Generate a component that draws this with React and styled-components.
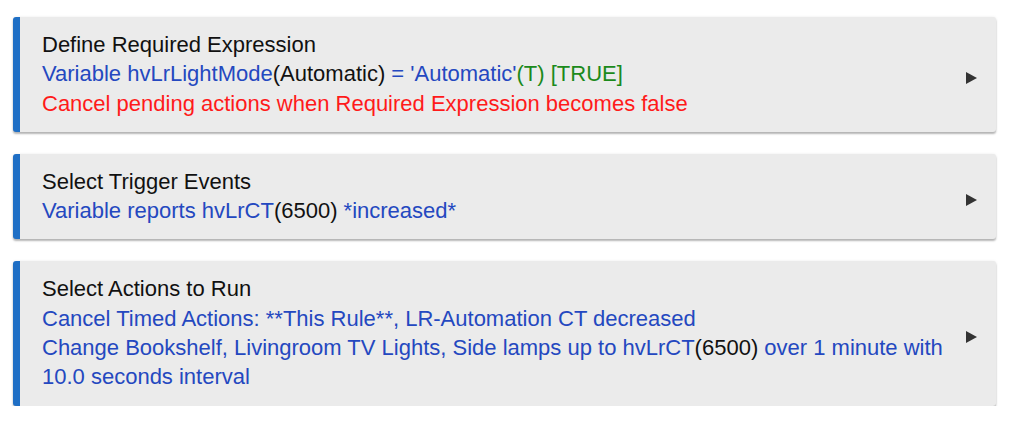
import React from "react";
import styled, { createGlobalStyle } from "styled-components";

const Global = createGlobalStyle`
  html, body { margin: 0; padding: 0; background: #ffffff; }
  body { font-family: "Liberation Sans", Arial, sans-serif; }
`;

const Page = styled.div`
  display: flex;
  flex-direction: column;
  gap: 22px;
  padding: 17px 28px 0 13px;
`;

const Card = styled.div`
  display: flex;
  align-items: center;
  background: #ebebeb;
  border-left: 7px solid #1f6fc5;
  border-radius: 3px;
  box-shadow: 0 2px 2px rgba(0, 0, 0, 0.28), 0 0 3px rgba(0, 0, 0, 0.08);
  padding: 13px 0 14px 22px;
`;

const Body = styled.div`
  flex: 1;
  font-size: 22px;
  line-height: 29.3px;
  color: #111;
  padding-right: 2px;
`;

const Line = styled.div`
  color: ${(p) => p.$color || "#111"};
`;

const Span = styled.span`
  color: ${(p) => p.$color};
`;

const Arrow = styled.div`
  width: 0;
  height: 0;
  border-top: 6px solid transparent;
  border-bottom: 6px solid transparent;
  border-left: 11px solid #333;
  margin: 8px 19px 0 14px;
  flex-shrink: 0;
`;

const BLUE = "#2448c0";
const RED = "#ff1a1a";
const GREEN = "#1b8a1b";
const BLACK = "#111";

export default function App() {
  return (
    <>
      <Global />
      <Page>
        <Card>
          <Body>
            <Line>Define Required Expression</Line>
            <Line $color={BLUE}>
              Variable hvLrLightMode<Span $color={BLACK}>(Automatic)</Span> = 'Automatic'
              <Span $color={GREEN}>(T) [TRUE]</Span>
            </Line>
            <Line $color={RED}>Cancel pending actions when Required Expression becomes false</Line>
          </Body>
          <Arrow />
        </Card>
        <Card>
          <Body>
            <Line>Select Trigger Events</Line>
            <Line $color={BLUE}>
              Variable reports hvLrCT<Span $color={BLACK}>(6500)</Span> *increased*
            </Line>
          </Body>
          <Arrow />
        </Card>
        <Card>
          <Body>
            <Line>Select Actions to Run</Line>
            <Line $color={BLUE}>Cancel Timed Actions: **This Rule**, LR-Automation CT decreased</Line>
            <Line $color={BLUE}>
              Change Bookshelf, Livingroom TV Lights, Side lamps up to hvLrCT
              <Span $color={BLACK}>(6500)</Span> over 1 minute with 10.0 seconds interval
            </Line>
          </Body>
          <Arrow />
        </Card>
      </Page>
    </>
  );
}
